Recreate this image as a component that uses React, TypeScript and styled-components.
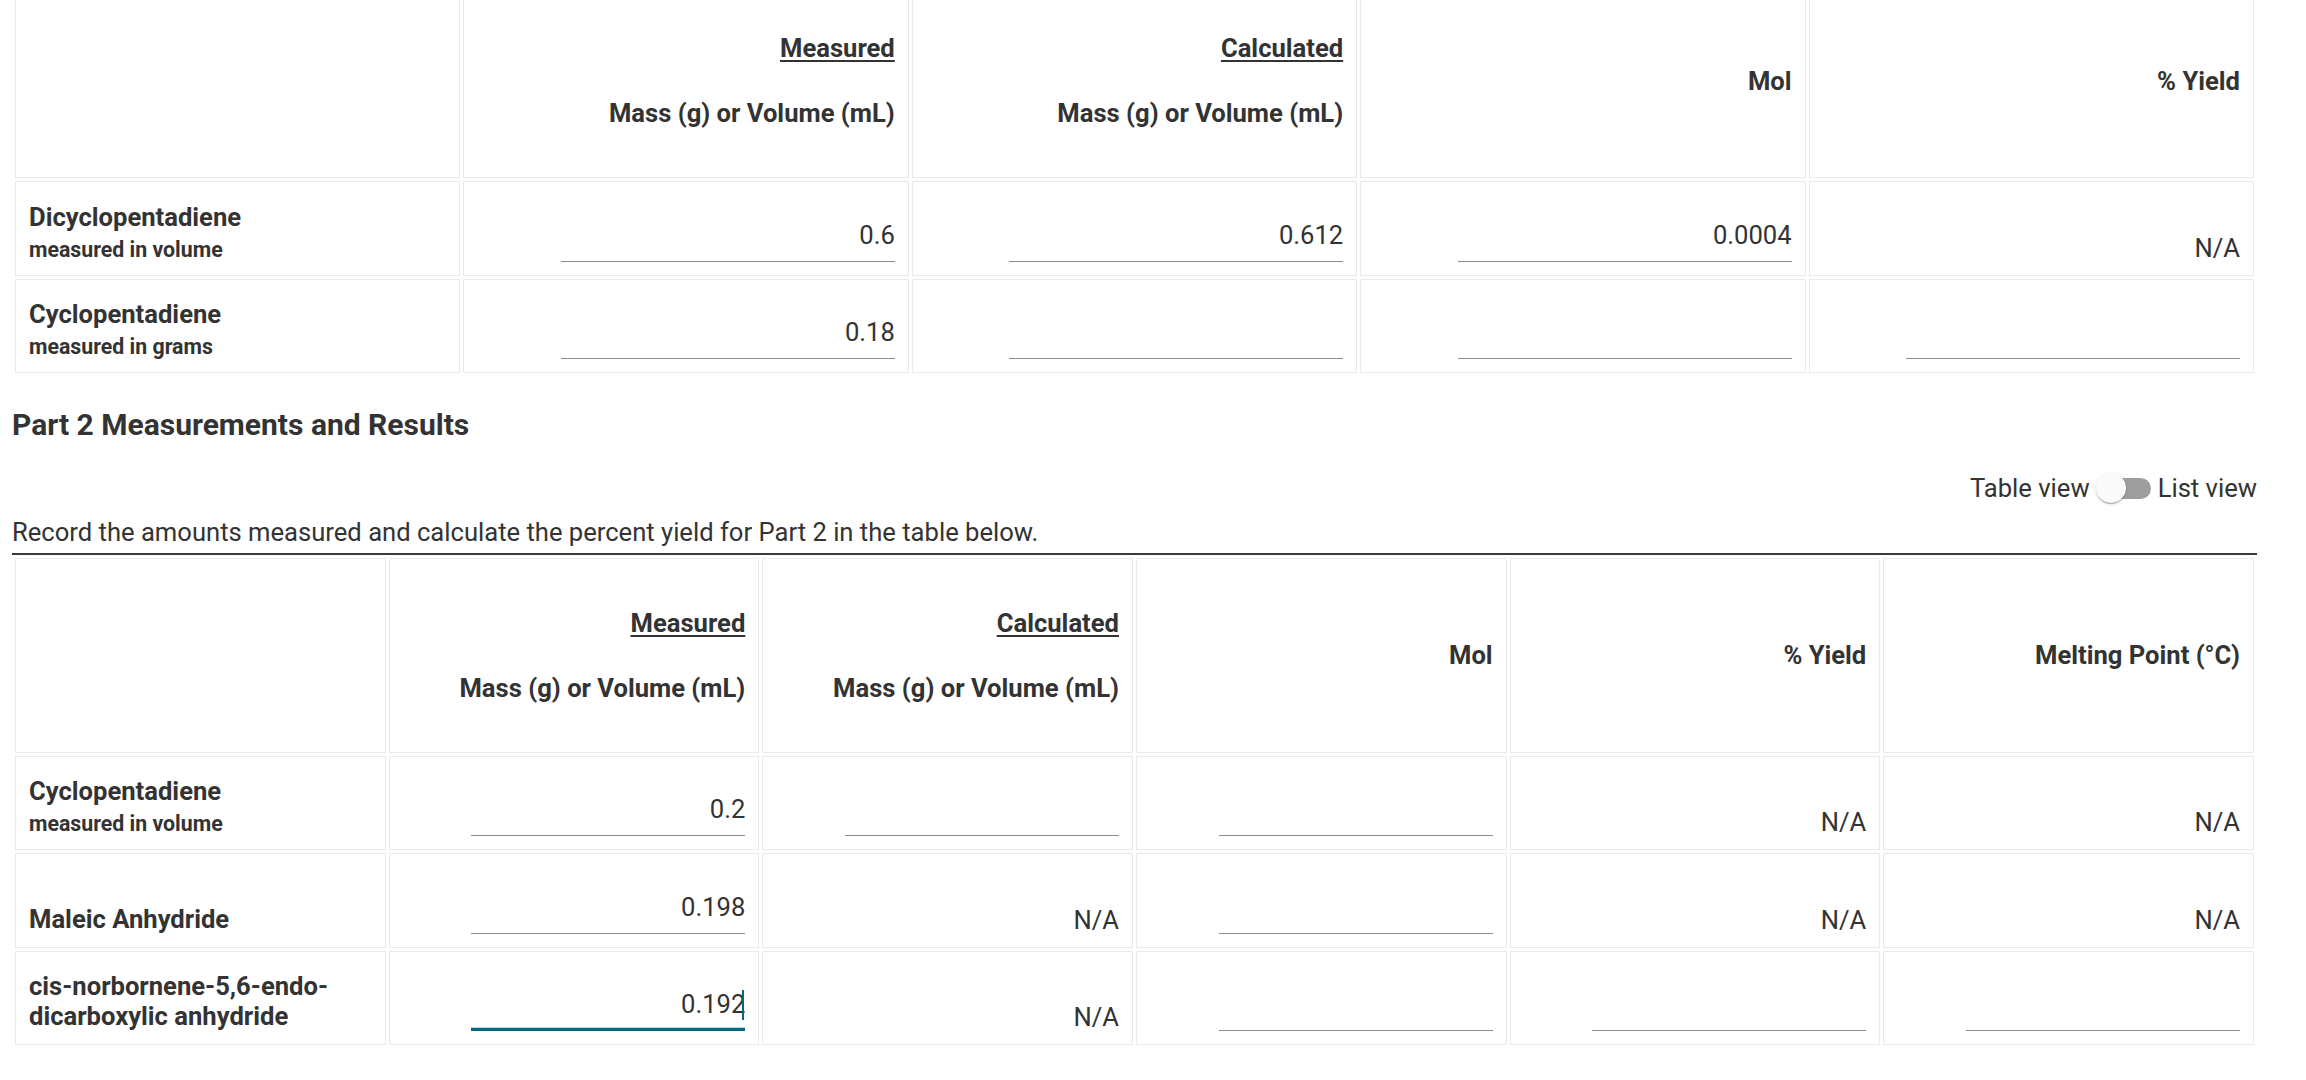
import React from "react";
import styled, { createGlobalStyle } from "styled-components";

const GlobalStyle = createGlobalStyle`
  *, *::before, *::after { box-sizing: border-box; }
  html, body { margin: 0; padding: 0; background: #ffffff; }
  body {
    font-family: Roboto, "Liberation Sans", Arial, sans-serif;
    color: #333333;
    overflow: hidden;
  }
`;

const Page = styled.main`
  width: 2245px;
  margin: -20px 0 0 12px;
`;

const DataTable = styled.table`
  width: 100%;
  table-layout: fixed;
  border-collapse: separate;
  border-spacing: 3.2px;
`;

const HeadCell = styled.th`
  height: 195.2px;
  padding: 13px;
  border: 1px solid #ebebe6;
  text-align: right;
  vertical-align: middle;
  font-size: 25.6px;
  line-height: 30px;
  font-weight: 700;
  color: #333333;
`;

const HeadTitle = styled.span`
  display: block;
  text-decoration: underline;
  text-decoration-thickness: 2px;
  text-underline-offset: 3px;
`;

const HeadSub = styled.span`
  display: block;
  margin-top: 35px;
`;

const Cell = styled.td`
  height: 94.4px;
  padding: 13px;
  border: 1px solid #ebebe6;
  text-align: right;
  vertical-align: bottom;
  font-size: 25.6px;
  line-height: 28px;
  color: #333333;
`;

const LabelCell = styled(Cell)`
  text-align: left;
`;

const RowName = styled.span`
  display: block;
  font-size: 25.6px;
  line-height: 30px;
  font-weight: 700;
`;

const RowSub = styled.span`
  display: block;
  margin-top: 5px;
  font-size: 21.3px;
  line-height: 25px;
  font-weight: 700;
`;

const FieldWrap = styled.div<{ $focused?: boolean }>`
  position: relative;
  width: 80%;
  margin-left: auto;

  &::after {
    content: "";
    display: ${(p) => (p.$focused ? "block" : "none")};
    position: absolute;
    right: 1px;
    bottom: 11px;
    width: 2px;
    height: 30px;
    background: #00697f;
  }
`;

const Field = styled.input<{ $focused?: boolean }>`
  display: block;
  width: 100%;
  height: 47px;
  padding: 6px 0 13px;
  border: none;
  outline: none;
  background: transparent;
  font-family: Roboto, "Liberation Sans", Arial, sans-serif;
  font-size: 25.6px;
  line-height: 28px;
  color: #333333;
  text-align: right;
  box-shadow: ${(p) =>
    p.$focused ? "inset 0 -3.2px 0 #00697f" : "inset 0 -1px 0 #8c8c8c"};
`;

const SectionTitle = styled.h2`
  margin: 31.5px 0 0;
  font-size: 30px;
  line-height: 36px;
  font-weight: 700;
  color: #333333;
`;

const ViewToggleRow = styled.div`
  display: flex;
  justify-content: flex-end;
  align-items: center;
  gap: 6px;
  height: 36px;
  margin-top: 27px;
  font-size: 25.6px;
  line-height: 30px;
  color: #333333;
`;

const Switch = styled.span`
  position: relative;
  display: inline-flex;
  align-items: center;
  width: 56px;
  height: 30px;
`;

const SwitchTrack = styled.span`
  display: block;
  margin-left: 4px;
  width: 51px;
  height: 21px;
  border-radius: 11px;
  background: #9e9e9e;
`;

const SwitchThumb = styled.span`
  position: absolute;
  left: 0;
  top: 0;
  width: 30px;
  height: 30px;
  border-radius: 50%;
  background: #fafafa;
  box-shadow: 0 2px 1px -1px rgba(0, 0, 0, 0.2), 0 1px 1px 0 rgba(0, 0, 0, 0.14),
    0 1px 4px 0 rgba(0, 0, 0, 0.12);
`;

const Instructions = styled.p`
  margin: 10.2px 0 0;
  padding-bottom: 6px;
  border-bottom: 2px solid #3a3a3a;
  font-size: 25.6px;
  line-height: 30px;
  color: #333333;
`;

type CellData =
  | { kind: "input"; value: string; focused?: boolean }
  | { kind: "na" };

type RowData = { name: string; sub?: string; cells: CellData[] };

type ColData = { title?: string; sub?: string };

const inp = (value: string, focused?: boolean): CellData => ({
  kind: "input",
  value,
  focused,
});
const na: CellData = { kind: "na" };

const part1Cols: ColData[] = [
  {},
  { title: "Measured", sub: "Mass (g) or Volume (mL)" },
  { title: "Calculated", sub: "Mass (g) or Volume (mL)" },
  { sub: "Mol" },
  { sub: "% Yield" },
];

const part1Rows: RowData[] = [
  {
    name: "Dicyclopentadiene",
    sub: "measured in volume",
    cells: [inp("0.6"), inp("0.612"), inp("0.0004"), na],
  },
  {
    name: "Cyclopentadiene",
    sub: "measured in grams",
    cells: [inp("0.18"), inp(""), inp(""), inp("")],
  },
];

const part2Cols: ColData[] = [
  {},
  { title: "Measured", sub: "Mass (g) or Volume (mL)" },
  { title: "Calculated", sub: "Mass (g) or Volume (mL)" },
  { sub: "Mol" },
  { sub: "% Yield" },
  { sub: "Melting Point (°C)" },
];

const part2Rows: RowData[] = [
  {
    name: "Cyclopentadiene",
    sub: "measured in volume",
    cells: [inp("0.2"), inp(""), inp(""), na, na],
  },
  {
    name: "Maleic Anhydride",
    cells: [inp("0.198"), na, inp(""), na, na],
  },
  {
    name: "cis-norbornene-5,6-endo-dicarboxylic anhydride",
    cells: [inp("0.192", true), na, inp(""), inp(""), inp("")],
  },
];

function ResultsTable({ cols, rows }: { cols: ColData[]; rows: RowData[] }) {
  return (
    <DataTable>
      <thead>
        <tr>
          {cols.map((c, i) => (
            <HeadCell key={i}>
              {c.title && c.sub ? (
                <>
                  <HeadTitle>{c.title}</HeadTitle>
                  <HeadSub>{c.sub}</HeadSub>
                </>
              ) : (
                c.sub
              )}
            </HeadCell>
          ))}
        </tr>
      </thead>
      <tbody>
        {rows.map((r, ri) => (
          <tr key={ri}>
            <LabelCell>
              <RowName>{r.name}</RowName>
              {r.sub && <RowSub>{r.sub}</RowSub>}
            </LabelCell>
            {r.cells.map((c, ci) => (
              <Cell key={ci}>
                {c.kind === "na" ? (
                  "N/A"
                ) : (
                  <FieldWrap $focused={c.focused}>
                    <Field
                      type="text"
                      readOnly
                      value={c.value}
                      $focused={c.focused}
                    />
                  </FieldWrap>
                )}
              </Cell>
            ))}
          </tr>
        ))}
      </tbody>
    </DataTable>
  );
}

export default function App() {
  return (
    <>
      <GlobalStyle />
      <Page>
        <ResultsTable cols={part1Cols} rows={part1Rows} />
        <SectionTitle>Part 2 Measurements and Results</SectionTitle>
        <ViewToggleRow>
          <span>Table view</span>
          <Switch>
            <SwitchTrack />
            <SwitchThumb />
          </Switch>
          <span>List view</span>
        </ViewToggleRow>
        <Instructions>
          Record the amounts measured and calculate the percent yield for Part 2
          in the table below.
        </Instructions>
        <ResultsTable cols={part2Cols} rows={part2Rows} />
      </Page>
    </>
  );
}
